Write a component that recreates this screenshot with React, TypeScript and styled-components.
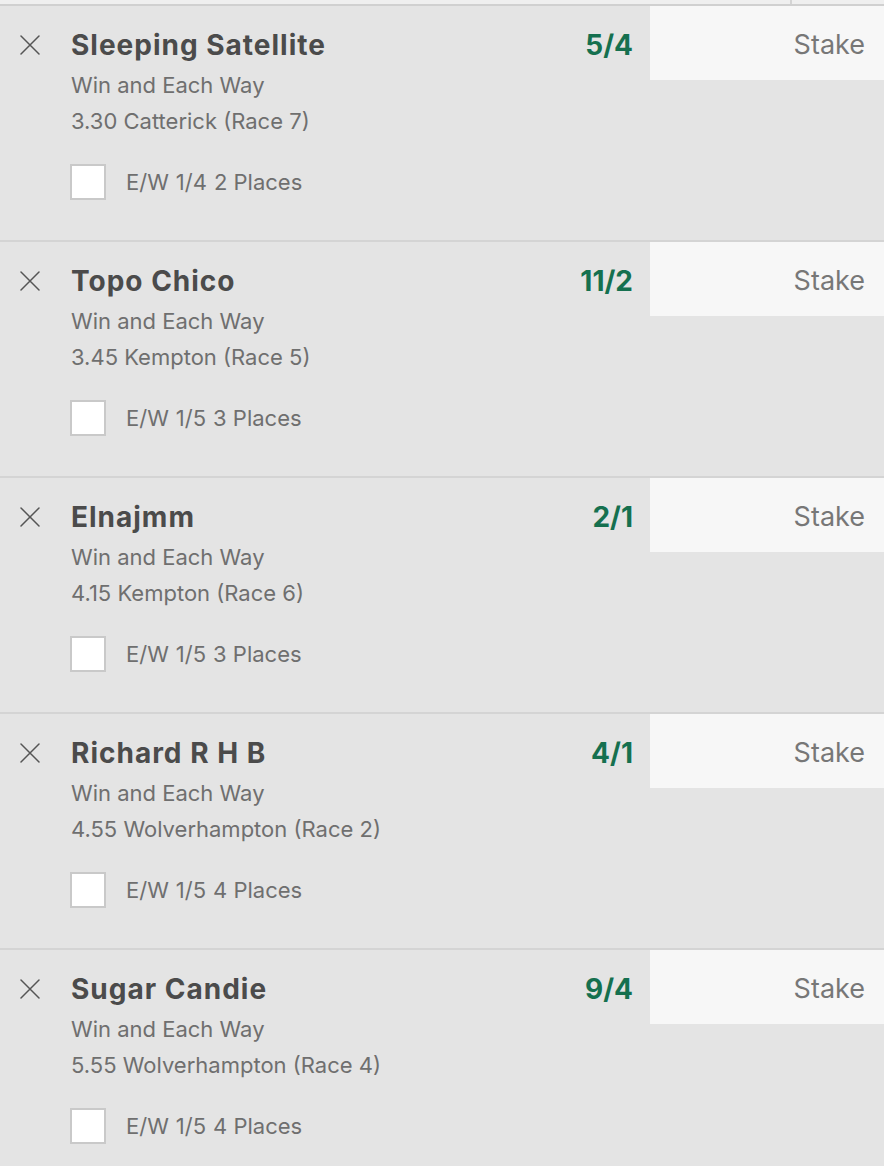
import React from 'react';
import styled, { createGlobalStyle } from 'styled-components';

interface Selection {
  id: number;
  name: string;
  odds: string;
  market: string;
  event: string;
  terms: string;
  places: string;
}

const selections: Selection[] = [
  { id: 1, name: 'Sleeping Satellite', odds: '5/4', market: 'Win and Each Way', event: '3.30 Catterick (Race 7)', terms: '1/4', places: '2 Places' },
  { id: 2, name: 'Topo Chico', odds: '11/2', market: 'Win and Each Way', event: '3.45 Kempton (Race 5)', terms: '1/5', places: '3 Places' },
  { id: 3, name: 'Elnajmm', odds: '2/1', market: 'Win and Each Way', event: '4.15 Kempton (Race 6)', terms: '1/5', places: '3 Places' },
  { id: 4, name: 'Richard R H B', odds: '4/1', market: 'Win and Each Way', event: '4.55 Wolverhampton (Race 2)', terms: '1/5', places: '4 Places' },
  { id: 5, name: 'Sugar Candie', odds: '9/4', market: 'Win and Each Way', event: '5.55 Wolverhampton (Race 4)', terms: '1/5', places: '4 Places' },
];

const GlobalStyle = createGlobalStyle`
  html, body {
    margin: 0;
    padding: 0;
    background: #e4e4e4;
    font-family: Inter, "Noto Sans", "Liberation Sans", sans-serif;
    -webkit-font-smoothing: antialiased;
  }
`;

const Slip = styled.div`
  width: 884px;
  display: flex;
  flex-direction: column;
`;

const TopBar = styled.div`
  display: flex;
  height: 4px;
  border-bottom: 2px solid #d0d0d0;
  background: #efefef;
`;

const TopCell = styled.div<{ $width?: number }>`
  flex: ${(p) => (p.$width ? `0 0 ${p.$width}px` : '1')};
  & + & {
    border-left: 2px solid #d4d4d4;
  }
`;

const Row = styled.div`
  display: flex;
  align-items: flex-start;
  background: #e4e4e4;
  border-bottom: 2px solid #d4d4d4;
`;

const Info = styled.div`
  flex: 1;
  display: grid;
  grid-template-columns: 51px 1fr auto;
  padding: 19px 17px 40px 20px;
`;

const CloseButton = styled.button`
  grid-column: 1;
  align-self: center;
  width: 20px;
  height: 20px;
  padding: 0;
  border: none;
  background: none;
  cursor: pointer;
  display: flex;
`;

const Name = styled.div`
  grid-column: 2;
  font-size: 28px;
  line-height: 40px;
  font-weight: 700;
  letter-spacing: 1px;
  color: #4b4b4b;
`;

const Odds = styled.div`
  grid-column: 3;
  font-size: 28px;
  line-height: 40px;
  font-weight: 700;
  color: #15704f;
  text-align: right;
`;

const Detail = styled.div<{ $first?: boolean }>`
  grid-column: 2 / 4;
  font-size: 22px;
  line-height: 36px;
  color: #6f6f6f;
  margin-top: ${(p) => (p.$first ? '2px' : '0')};
`;

const EachWay = styled.label`
  grid-column: 2 / 4;
  display: flex;
  align-items: center;
  gap: 20px;
  margin-top: 25px;
  margin-left: -1px;
  font-size: 22px;
  color: #6f6f6f;
  cursor: pointer;
`;

const Check = styled.span`
  width: 32px;
  height: 32px;
  background: #fff;
  border: 2px solid #c9c9c9;
  flex-shrink: 0;
`;

const Terms = styled.span`
  display: flex;
  gap: 7px;
`;

const StakeBox = styled.div`
  flex: 0 0 234px;
  height: 74px;
  background: #f7f7f7;
  display: flex;
  align-items: center;
  justify-content: flex-end;
  padding: 2px 19px 0 0;
  box-sizing: border-box;
  font-size: 27px;
  color: #777;
`;

const CloseIcon = () => (
  <svg width="20" height="20" viewBox="0 0 20 20">
    <path d="M1 1L19 19M19 1L1 19" stroke="#555" strokeWidth="1.5" strokeLinecap="round" />
  </svg>
);

const App: React.FC = () => (
  <>
    <GlobalStyle />
    <Slip>
      <TopBar>
        <TopCell $width={790} />
        <TopCell />
      </TopBar>
      {selections.map((s) => (
        <Row key={s.id}>
          <Info>
            <CloseButton aria-label="Remove">
              <CloseIcon />
            </CloseButton>
            <Name>{s.name}</Name>
            <Odds>{s.odds}</Odds>
            <Detail $first>{s.market}</Detail>
            <Detail>{s.event}</Detail>
            <EachWay>
              <Check />
              <Terms>
                <span>E/W</span>
                <span>{s.terms}</span>
                <span>{s.places}</span>
              </Terms>
            </EachWay>
          </Info>
          <StakeBox>Stake</StakeBox>
        </Row>
      ))}
    </Slip>
  </>
);

export default App;
